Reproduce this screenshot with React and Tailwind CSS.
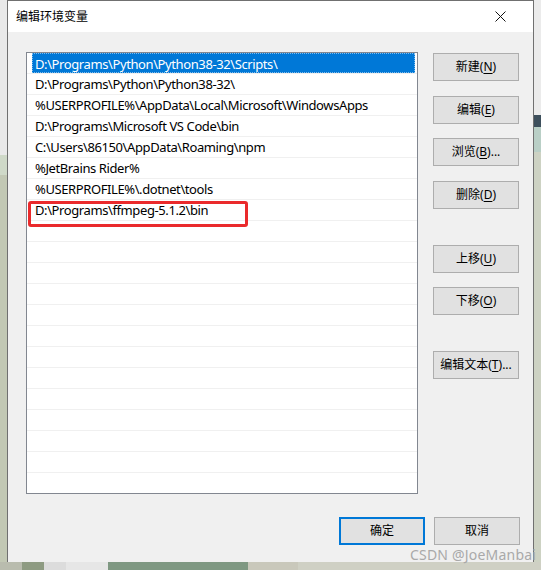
import React from 'react';

const paths = [
  'D:\\Programs\\Python\\Python38-32\\Scripts\\',
  'D:\\Programs\\Python\\Python38-32\\',
  '%USERPROFILE%\\AppData\\Local\\Microsoft\\WindowsApps',
  'D:\\Programs\\Microsoft VS Code\\bin',
  'C:\\Users\\86150\\AppData\\Roaming\\npm',
  '%JetBrains Rider%',
  '%USERPROFILE%\\.dotnet\\tools',
  'D:\\Programs\\ffmpeg-5.1.2\\bin',
];

const ROWS = 21;

const sideButtons = [
  { label: '新建', key: 'N', mt: 'mt-[21px]' },
  { label: '编辑', key: 'E', mt: 'mt-[15px]' },
  { label: '浏览', key: 'B', mt: 'mt-[14px]', dots: true },
  { label: '删除', key: 'D', mt: 'mt-[15px]' },
  { label: '上移', key: 'U', mt: 'mt-[36px]' },
  { label: '下移', key: 'O', mt: 'mt-[14px]' },
  { label: '编辑文本', key: 'T', mt: 'mt-[36px]', dots: true },
];

const font = { fontFamily: '"Noto Sans", "Noto Sans CJK SC", sans-serif' };

function WinButton({ label, k, dots, primary, className = '' }) {
  return (
    <div
      className={`flex h-[28px] w-[86px] items-center justify-center bg-[#e1e1e1] text-[12px] text-black ${
        primary ? 'border-2 border-[#0078d7]' : 'border border-[#adadad]'
      } ${className}`}
    >
      <span>
        {label}
        {k && (
          <>
            (<span className="underline underline-offset-2">{k}</span>)
          </>
        )}
        {dots && '...'}
      </span>
    </div>
  );
}

function PathList() {
  const rows = Array.from({ length: ROWS }, (_, i) => paths[i] ?? '');
  return (
    <div className="relative h-[442px] w-[392px] overflow-hidden border border-[#828790] bg-white">
      {rows.map((p, i) => (
        <div
          key={i}
          className="flex h-[21px] shrink-0 border-b border-[#f0f0f0] text-[13px] leading-[20px] tracking-[-0.4px] text-black"
        >
          {i === 0 ? (
            <div className="ml-[5px] mr-[2px] flex flex-1 border border-dotted border-[#ffffff80] bg-[#0078d7] pl-[2px] text-white">
              {p}
            </div>
          ) : (
            <div className="pl-[8px]">{p}</div>
          )}
        </div>
      ))}
      {/* annotation box */}
      <div className="absolute left-[1px] top-[148px] h-[26px] w-[220px] rounded-[3px] border-[3px] border-[#ea2a2c]" />
    </div>
  );
}

export default function App() {
  return (
    <div className="relative flex h-[570px] w-[541px] flex-col overflow-hidden bg-[#c9cdbf]" style={font}>
      <div className="flex h-[562px]">
        {/* desktop strip left */}
        <div className="flex w-[7px] flex-col">
          <div className="h-[155px] bg-[#e9e9e9]" />
          <div className="h-[20px] bg-[#cfd9c8]" />
          <div className="flex-1 bg-[#c2c8b4]" />
        </div>

        {/* dialog */}
        <div className="flex h-[563px] w-[527px] shrink-0 flex-col border border-[#707070] bg-[#f0f0f0]">
          <div className="flex h-[31px] items-center justify-between bg-white pl-[8px] pr-[27px]">
            <span className="text-[12px] text-black">编辑环境变量</span>
            <svg width="11" height="11" viewBox="0 0 11 11">
              <path d="M0.5 0.5 L10.5 10.5 M10.5 0.5 L0.5 10.5" stroke="#111" strokeWidth="1" />
            </svg>
          </div>

          <div className="flex flex-1 flex-col">
            <div className="flex pl-[18px]">
              <div className="mt-[20px]">
                <PathList />
              </div>
              <div className="ml-[15px] flex flex-col">
                {sideButtons.map((b) => (
                  <WinButton key={b.label} label={b.label} k={b.key} dots={b.dots} className={b.mt} />
                ))}
              </div>
            </div>

            <div className="mt-[23px] flex justify-end gap-[9px] pr-[13px]">
              <WinButton label="确定" primary />
              <WinButton label="取消" />
            </div>
          </div>
        </div>

        {/* desktop strip right */}
        <div className="flex w-[7px] flex-col">
          <div className="h-[115px] bg-[#ebebeb]" />
          <div className="h-[12px] bg-[#3d4f5c]" />
          <div className="h-[25px] bg-[#b9cfc6]" />
          <div className="flex-1 bg-[#cdd2c3]" />
        </div>
      </div>

      {/* desktop strip bottom */}
      <div className="flex h-[8px]">
        <div className="w-[22px] bg-[#b9bcae]" />
        <div className="w-[22px] bg-[#8e9b82]" />
        <div className="w-[22px] bg-[#dcdcdc]" />
        <div className="w-[42px] bg-[#e6e6e6]" />
        <div className="w-[140px] bg-[#7f9882]" />
        <div className="w-[50px] bg-[#c9c8bb]" />
        <div className="flex-1 bg-[#cfd0c4]" />
      </div>

      <div className="absolute left-[410px] top-[546px] text-[14px] leading-[18px] tracking-[0.2px] text-[#a9a9a9]">
        CSDN @JoeManbai
      </div>
    </div>
  );
}
